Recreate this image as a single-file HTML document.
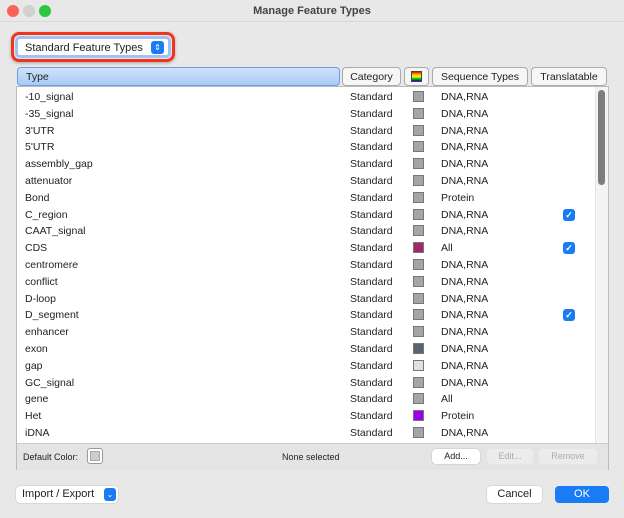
<!DOCTYPE html><html><head><style>
*{box-sizing:border-box;margin:0;padding:0}
body{width:624px;height:518px;background:#e8e8e8;font-family:"Liberation Sans",sans-serif;font-size:10.5px;color:#222;position:relative;overflow:hidden}
.abs{position:absolute}
.tb{left:0;top:0;width:624px;height:22px;background:#e8e8e8;border-bottom:1px solid #d8d8d8;text-align:center;line-height:22px;font-weight:bold;font-size:11px;color:#444}
.dot{width:12px;height:12px;border-radius:50%;top:5px}
.hdr{top:67px;height:19px;border:1px solid #aaa;border-radius:4px;background:#f6f6f6;text-align:center;line-height:19px;font-size:10.5px}
.row{left:17px;width:578px;height:17px;line-height:17px}
.row span{position:absolute}
.sw{width:11px;height:11px;border:1px solid #777;top:2px;left:396px;background:#a3a5ab}
.ck{width:12px;height:12px;border-radius:3px;background:#1a7cf5;left:546px;top:2px;color:#fff;font-size:9px;line-height:12px;text-align:center;font-weight:bold}
.btn{height:15px;border-radius:4px;font-size:9px;text-align:center;line-height:15px}
</style></head><body>
<div class="abs tb">Manage Feature Types</div>
<div class="abs dot" style="left:7px;background:#fe5f57"></div>
<div class="abs dot" style="left:23px;background:#d0d0d0"></div>
<div class="abs dot" style="left:39px;background:#2ac840"></div>
<div class="abs" style="left:11px;top:32px;width:164px;height:30px;border:3px solid #f0341f;border-radius:8px;box-shadow:0 1px 3px rgba(0,0,0,.3)"></div>
<div class="abs" style="left:15px;top:36px;width:156px;height:22px;border:3px solid #9ec2f6;border-radius:5px;background:#fff;"></div>
<div class="abs" style="left:25px;top:42px;font-size:11px">Standard Feature Types</div>
<div class="abs" style="left:151px;top:41px;width:13px;height:13px;border-radius:3px;background:#1a7cf5;color:#fff;font-size:8px;line-height:13px;text-align:center">⇕</div>
<div class="abs" style="left:16px;top:86px;width:593px;height:384px;background:#fff;border:1px solid #bbb"></div>
<div class="abs" style="left:17px;top:443px;width:591px;height:27px;background:#e4e4e4;border-top:1px solid #ccc"></div>
<div class="abs" style="left:595px;top:87px;width:13px;height:356px;background:#f4f4f4;border-left:1px solid #e4e4e4"></div>
<div class="abs" style="left:598px;top:90px;width:7px;height:95px;border-radius:4px;background:#7d7d7d"></div>
<div class="abs hdr" style="left:17px;width:323px;text-align:left;padding-left:8px;background:linear-gradient(#cfe2fb,#a9cbf5);border-color:#6b9de0">Type</div>
<div class="abs hdr" style="left:342px;width:59px">Category</div>
<div class="abs hdr" style="left:404px;width:25px"><div style="margin:3px auto;width:11px;height:11px;border:1px solid #444;background:linear-gradient(#f00,#fa0,#ff0,#0c0,#00f)"></div></div>
<div class="abs hdr" style="left:432px;width:96px">Sequence Types</div>
<div class="abs hdr" style="left:531px;width:76px">Translatable</div>
<div id="rows"></div>
<div class="abs" style="left:23px;top:452px;font-size:9px">Default Color:</div>
<div class="abs" style="left:87px;top:448px;width:16px;height:16px;border:1px solid #999;border-radius:3px;background:#fff"><div style="margin:2px;width:10px;height:10px;background:#ccc;border:1px solid #aaa"></div></div>
<div class="abs" style="left:282px;top:452px;font-size:9px">None selected</div>
<div class="abs btn" style="left:432px;top:449px;width:48px;background:#fff;box-shadow:0 0 1px #888">Add...</div>
<div class="abs btn" style="left:487px;top:449px;width:46px;background:#ececec;color:#aaa">Edit...</div>
<div class="abs btn" style="left:539px;top:449px;width:58px;background:#ececec;color:#aaa">Remove</div>
<div class="abs" style="left:16px;top:486px;width:102px;height:17px;background:#fff;border-radius:4px;box-shadow:0 0 1px #888;font-size:11px;line-height:17px;padding-left:6px">Import / Export</div>
<div class="abs" style="left:104px;top:488px;width:12px;height:13px;border-radius:3px;background:#1a7cf5;color:#fff;font-size:8px;line-height:13px;text-align:center">⌄</div>
<div class="abs" style="left:487px;top:486px;width:55px;height:17px;background:#fff;border-radius:4px;box-shadow:0 0 1px #888;font-size:11px;line-height:17px;text-align:center">Cancel</div>
<div class="abs" style="left:555px;top:486px;width:54px;height:17px;background:#1a7cf5;border-radius:4px;font-size:11px;line-height:17px;text-align:center;color:#fff">OK</div>
<script>
var d=[["-10_signal"],["-35_signal"],["3'UTR"],["5'UTR"],["assembly_gap"],["attenuator"],["Bond","","Protein"],["C_region","","DNA,RNA",1],["CAAT_signal"],["CDS","#a3286a","All",1],["centromere"],["conflict"],["D-loop"],["D_segment","","DNA,RNA",1],["enhancer"],["exon","#5a6170"],["gap","#e0e0e0"],["GC_signal"],["gene","","All"],["Het","#9b00e8","Protein"],["iDNA"]];
var h="";d.forEach(function(r,i){var t=89+i*16.8;h+='<div class="abs row" style="top:'+t+'px"><span style="left:8px">'+r[0]+'</span><span style="left:333px">Standard</span><span class="sw" style="'+(r[1]?'background:'+r[1]:'')+'"></span><span style="left:424px">'+(r[2]||"DNA,RNA")+'</span>'+(r[3]?'<span class="ck">✓</span>':'')+'</div>'});
document.getElementById("rows").innerHTML=h;
</script>
</body></html>
